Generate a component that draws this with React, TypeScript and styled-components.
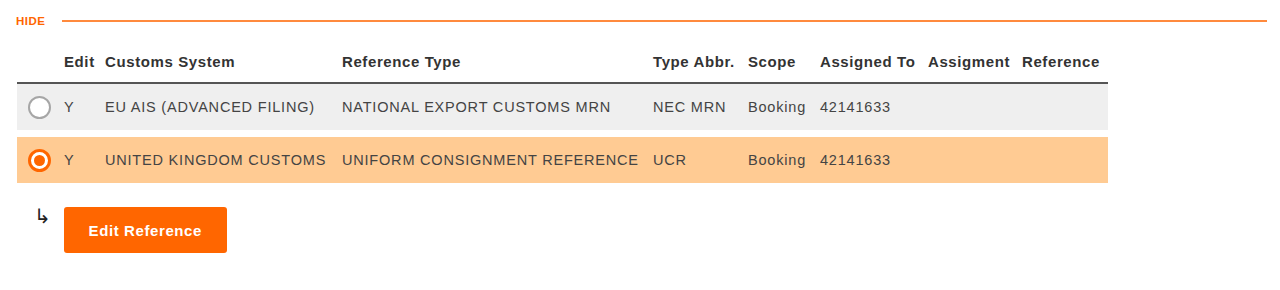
import React, { useState } from 'react'
import styled, { createGlobalStyle } from 'styled-components'

const GlobalStyle = createGlobalStyle`
  html, body {
    margin: 0;
    padding: 0;
    background: #ffffff;
    font-family: "Liberation Sans", Arial, sans-serif;
  }
`

const Page = styled.div`
  padding: 12px 13px 0 17px;
`

const SectionHead = styled.div`
  display: flex;
  align-items: center;
  gap: 17px;
  height: 18px;
`

const HideLink = styled.span`
  font-size: 11.5px;
  font-weight: bold;
  color: #ff6600;
  letter-spacing: 0.5px;
  margin-left: -1px;
  cursor: pointer;
`

const Rule = styled.div`
  flex: 1;
  height: 2px;
  background: #ff8a3d;
`

const Table = styled.table`
  border-collapse: separate;
  border-spacing: 0;
  table-layout: fixed;
  width: 1091px;
  margin-top: 10px;

  th,
  td {
    box-sizing: border-box;
  }
`

const HeadCell = styled.th<{ $w: number }>`
  width: ${({ $w }) => $w}px;
  text-align: left;
  font-size: 15px;
  font-weight: bold;
  color: #333333;
  padding: 0 0 0 4px;
  height: 44px;
  white-space: nowrap;
  border-bottom: 2px solid #555555;
  letter-spacing: 0.6px;
`

const Row = styled.tr<{ $selected: boolean }>`
  background: ${({ $selected }) => ($selected ? '#ffcb93' : '#efefef')};
`

const Cell = styled.td`
  font-size: 14.5px;
  color: #444444;
  padding: 0 0 0 4px;
  height: 46px;
  white-space: nowrap;
  letter-spacing: 0.8px;
`

const Spacer = styled.tr`
  height: 7px;
`

const RadioCell = styled.td`
  padding: 0 0 0 11px;
`

const Radio = styled.span<{ $checked: boolean }>`
  display: block;
  box-sizing: border-box;
  width: 23px;
  height: 23px;
  border-radius: 50%;
  background: #ffffff;
  border: ${({ $checked }) => ($checked ? '3px solid #ff6600' : '2px solid #a6a6a6')};
  position: relative;
  cursor: pointer;

  &::after {
    content: '';
    display: ${({ $checked }) => ($checked ? 'block' : 'none')};
    position: absolute;
    left: 3px;
    top: 3px;
    width: 11px;
    height: 11px;
    border-radius: 50%;
    background: #ff6600;
  }
`

const Actions = styled.div`
  display: flex;
  align-items: flex-start;
  gap: 13px;
  margin-top: 24px;
  padding-left: 17px;
`

const Arrow = styled.span`
  font-size: 20px;
  color: #222222;
  line-height: 1;
  margin-top: -1px;
  font-family: "DejaVu Sans", sans-serif;
`

const EditButton = styled.button`
  width: 163px;
  height: 46px;
  border: none;
  border-radius: 3px;
  background: #ff6600;
  color: #ffffff;
  font-family: "Liberation Sans", Arial, sans-serif;
  font-size: 15px;
  font-weight: bold;
  letter-spacing: 0.6px;
  cursor: pointer;
`

const columns = [
  { key: 'radio', label: '', w: 43 },
  { key: 'edit', label: 'Edit', w: 41 },
  { key: 'system', label: 'Customs System', w: 237 },
  { key: 'type', label: 'Reference Type', w: 311 },
  { key: 'abbr', label: 'Type Abbr.', w: 95 },
  { key: 'scope', label: 'Scope', w: 72 },
  { key: 'assigned', label: 'Assigned To', w: 108 },
  { key: 'assignment', label: 'Assigment', w: 94 },
  { key: 'reference', label: 'Reference', w: 90 },
]

const rows = [
  {
    id: 1,
    edit: 'Y',
    system: 'EU AIS (ADVANCED FILING)',
    type: 'NATIONAL EXPORT CUSTOMS MRN',
    abbr: 'NEC MRN',
    scope: 'Booking',
    assigned: '42141633',
    assignment: '',
    reference: '',
  },
  {
    id: 2,
    edit: 'Y',
    system: 'UNITED KINGDOM CUSTOMS',
    type: 'UNIFORM CONSIGNMENT REFERENCE',
    abbr: 'UCR',
    scope: 'Booking',
    assigned: '42141633',
    assignment: '',
    reference: '',
  },
]

export default function App() {
  const [selected, setSelected] = useState(2)

  return (
    <Page>
      <GlobalStyle />
      <SectionHead>
        <HideLink>HIDE</HideLink>
        <Rule />
      </SectionHead>
      <Table>
        <thead>
          <tr>
            {columns.map((c) => (
              <HeadCell key={c.key} $w={c.w}>
                {c.label}
              </HeadCell>
            ))}
          </tr>
        </thead>
        <tbody>
          {rows.map((r, i) => (
            <React.Fragment key={r.id}>
              {i > 0 && <Spacer />}
              <Row $selected={selected === r.id} onClick={() => setSelected(r.id)}>
                <RadioCell>
                  <Radio $checked={selected === r.id} />
                </RadioCell>
                <Cell>{r.edit}</Cell>
                <Cell>{r.system}</Cell>
                <Cell>{r.type}</Cell>
                <Cell>{r.abbr}</Cell>
                <Cell>{r.scope}</Cell>
                <Cell>{r.assigned}</Cell>
                <Cell>{r.assignment}</Cell>
                <Cell>{r.reference}</Cell>
              </Row>
            </React.Fragment>
          ))}
        </tbody>
      </Table>
      <Actions>
        <Arrow>↳</Arrow>
        <EditButton>Edit Reference</EditButton>
      </Actions>
    </Page>
  )
}
